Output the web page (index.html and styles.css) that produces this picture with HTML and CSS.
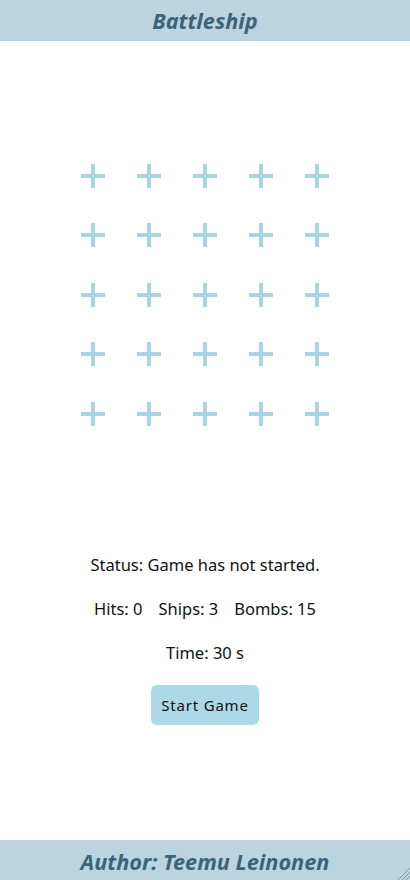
FILE: index.html
```html
<!DOCTYPE html>
<html>
<head>
<meta charset="utf-8">
<link rel="stylesheet" href="styles.css">
</head>
<body>
<div class="page">
  <header class="bar top">Battleship</header>
  <main class="main">
    <div class="grid" id="grid"></div>
    <div class="info">
      <p class="line">Status: Game has not started.</p>
      <p class="line stats"><span>Hits: 0</span><span>Ships: 3</span><span>Bombs: 15</span></p>
      <p class="line">Time: 30 s</p>
      <button class="start">Start Game</button>
    </div>
  </main>
  <footer class="bar bottom">Author: Teemu Leinonen
    <svg class="grip" width="14" height="14" viewBox="0 0 14 14"><path d="M14 2 L2 14 M14 6 L6 14 M14 10 L10 14" stroke="#8a9aa3" stroke-width="1"/></svg>
  </footer>
</div>
<script>
  var g = document.getElementById('grid');
  for (var i = 0; i < 25; i++) {
    var c = document.createElement('div');
    c.className = 'cell';
    c.innerHTML = '<svg width="26" height="26" viewBox="0 0 26 26"><path d="M13 1 V25 M1 13 H25" stroke="#a9d4e1" stroke-width="4"/></svg>';
    g.appendChild(c);
  }
</script>
</body>
</html>
```
FILE: styles.css
```css
html, body { margin: 0; padding: 0; }
body { font-family: "Noto Sans", "Open Sans", sans-serif; color: #111; background: #fff; }
.page { height: 880px; display: flex; flex-direction: column; }
.bar { background: #bcd4df; color: #3b6479; font-weight: bold; font-style: italic; font-size: 21.7px; text-align: center; }
.top { height: 41px; line-height: 41px; }
.bottom { height: 40px; line-height: 43px; position: relative; }
.grip { position: absolute; right: 0; bottom: 0; }
.main { flex: 1; display: flex; flex-direction: column; align-items: center; }
.grid { margin-top: 105px; display: grid; grid-template-columns: repeat(5, 56px); grid-auto-rows: 59.5px; }
.cell { display: flex; align-items: center; justify-content: center; }
.info { margin-top: 109px; display: flex; flex-direction: column; align-items: center; }
.line { margin: 0 0 20px; font-size: 16.5px; line-height: 24px; }
.stats { display: flex; gap: 16px; }
.start { margin-top: 0; width: 108px; height: 40px; border: none; border-radius: 6px; background: #add8e6; font-family: inherit; font-size: 15px; letter-spacing: 0.8px; color: #111; }
```
